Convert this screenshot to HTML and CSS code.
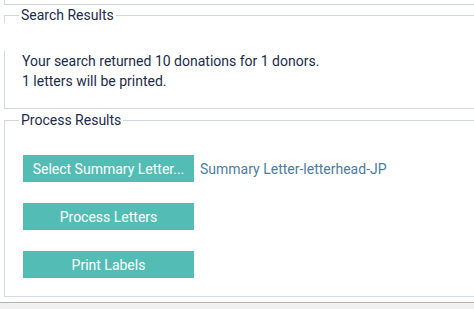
FILE: index.html
```html
<!DOCTYPE html>
<html>
<head>
<meta charset="utf-8">
<link rel="stylesheet" href="styles.css">
</head>
<body>
<div class="page">
  <div class="prev-box"></div>
  <section class="group search">
    <div class="group-head"><span class="line-start"></span><span class="title">Search Results</span><span class="line-end"></span></div>
    <div class="group-body">
      <p class="msg">Your search returned 10 donations for 1 donors.<br>1 letters will be printed.</p>
    </div>
  </section>
  <section class="group process">
    <div class="group-head"><span class="line-start"></span><span class="title">Process Results</span><span class="line-end"></span></div>
    <div class="group-body actions">
      <div class="row">
        <button class="btn">Select Summary Letter...</button>
        <span class="letter-name">Summary Letter-letterhead-JP</span>
      </div>
      <div class="row">
        <button class="btn">Process Letters</button>
      </div>
      <div class="row">
        <button class="btn">Print Labels</button>
      </div>
    </div>
  </section>
  <div class="footer"></div>
</div>
</body>
</html>
```

FILE: styles.css
```css
html, body {
  margin: 0;
  padding: 0;
  background: #ffffff;
  overflow: hidden;
}
.page {
  width: 474px;
  height: 309px;
  overflow: hidden;
  font-family: Roboto, "Liberation Sans", sans-serif;
  font-size: 14px;
  color: #1c2b4a;
}
.prev-box {
  height: 4px;
  margin-left: 4px;
  border-left: 1px solid #d3d9e0;
  border-bottom: 1px solid #c9d3de;
}
.group {
  margin-left: 4px;
}
.group-head {
  display: flex;
  height: 16px;
  align-items: flex-end;
}
.line-start {
  width: 14px;
  height: 7px;
  border-top: 1px solid #cdd6e0;
  border-left: 1px solid #d3d9e0;
}
.line-end {
  flex: 1;
  height: 7px;
  border-top: 1px solid #cdd6e0;
}
.title {
  align-self: stretch;
  padding: 0 2px;
  line-height: 16px;
  color: #1c2b4a;
}
.group-body {
  border-left: 1px solid #d3d9e0;
  border-bottom: 1px solid #d3d9e0;
  padding: 0 14px 17px;
}
.search {
  margin-top: 2px;
}
.msg {
  margin: 28px 0 0 3px;
  line-height: 20px;
}
.process {
  margin-top: 3px;
}
.actions {
  padding-top: 27px;
  padding-bottom: 18px;
  display: flex;
  flex-direction: column;
  gap: 21px;
}
.row {
  display: flex;
  align-items: center;
  gap: 6px;
}
.btn {
  margin: 0 0 0 4px;
  width: 171px;
  height: 27px;
  border: none;
  background: #53bcb5;
  color: #ffffff;
  font-family: Roboto, "Liberation Sans", sans-serif;
  font-size: 14px;
  padding: 0;
}
.letter-name {
  color: #4a7da0;
  font-size: 14px;
}
.footer {
  margin-top: 5px;
  height: 20px;
  border-top: 1px solid #b3b3b3;
  background: #f0f0f0;
}
```
